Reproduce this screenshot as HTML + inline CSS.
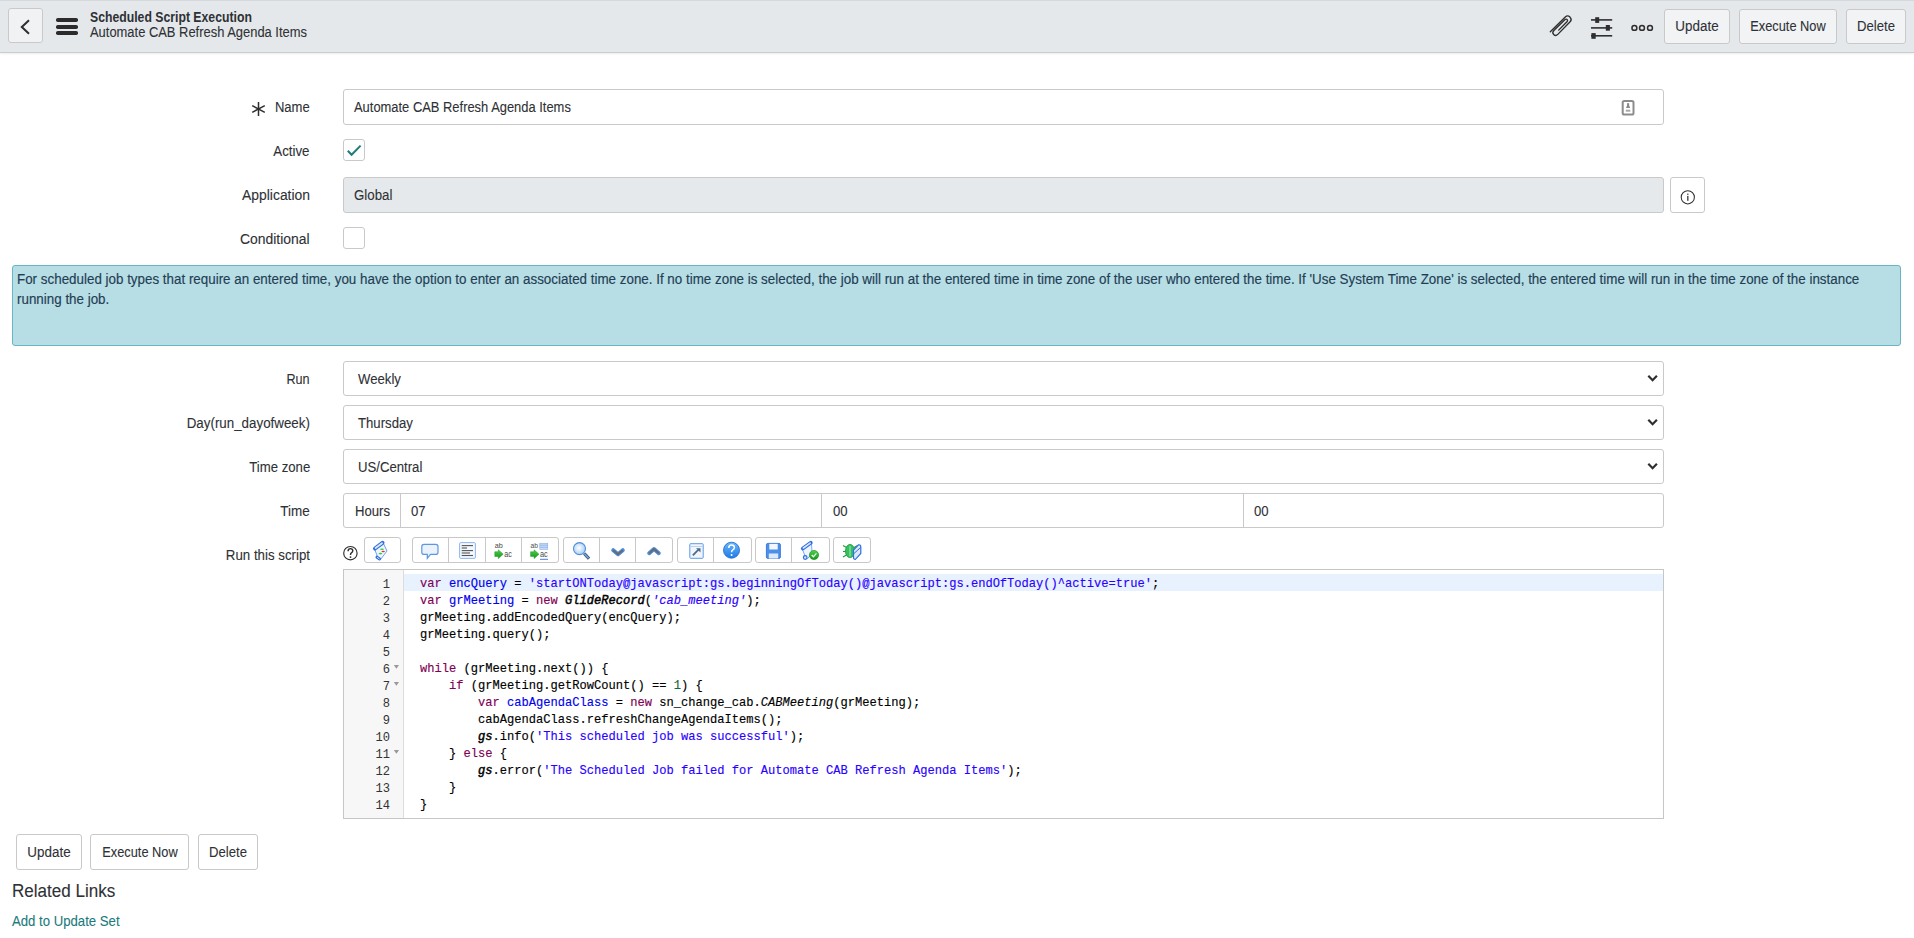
<!DOCTYPE html>
<html><head><meta charset="utf-8"><title>Scheduled Script Execution</title>
<style>
html,body{margin:0;padding:0;background:#fff;width:1914px;height:938px;overflow:hidden;position:relative;font-family:"Liberation Sans", sans-serif;}
</style></head><body>
<div style="position:absolute;left:0px;top:0px;width:1914px;height:53px;box-sizing:border-box;background:#e5e8eb;border-top:1px solid #d6d9dc;border-bottom:1px solid #cbcbcb;box-shadow:0 1px 2px rgba(0,0,0,0.08)"></div>
<div style="position:absolute;left:8px;top:8px;width:35px;height:35px;box-sizing:border-box;background:#f0f2f4;border:1px solid #c9c9c9;border-radius:3px"></div>
<svg style="position:absolute;left:18px;top:17px" width="14" height="20" viewBox="0 0 14 20"><polyline points="11,3.2 3.8,10 11,16.8" fill="none" stroke="#2e2e2e" stroke-width="2.0" stroke-linecap="butt" stroke-linejoin="miter"/></svg>
<div style="position:absolute;left:55.5px;top:18.2px;width:22.5px;height:3.6000000000000014px;box-sizing:border-box;background:#2b2b2b;border-radius:1.8px"></div>
<div style="position:absolute;left:55.5px;top:25.2px;width:22.5px;height:3.6000000000000014px;box-sizing:border-box;background:#2b2b2b;border-radius:1.8px"></div>
<div style="position:absolute;left:55.5px;top:31.3px;width:22.5px;height:3.599999999999998px;box-sizing:border-box;background:#2b2b2b;border-radius:1.8px"></div>
<div style="position:absolute;left:89.8px;top:8.00px;font-family:'Liberation Sans', sans-serif;font-size:13.95px;line-height:18px;font-weight:700;color:#2e3135;white-space:pre;-webkit-text-stroke:0px #2e3135;transform:scaleX(0.8781);transform-origin:left 0;">Scheduled Script Execution</div>
<div style="position:absolute;left:89.8px;top:23.00px;font-family:'Liberation Sans', sans-serif;font-size:14.24px;line-height:19px;font-weight:400;color:#2e3135;white-space:pre;-webkit-text-stroke:0.1px #2e3135;transform:scaleX(0.9080);transform-origin:left 0;">Automate CAB Refresh Agenda Items</div>
<svg style="position:absolute;left:1540px;top:10px" width="120" height="35" viewBox="1540 10 120 35"><path d="M1550.3 31.8 L1565.3 16.9 Q1567.6 14.8 1570 17.1 Q1572.3 19.5 1570.1 21.8 L1557.8 34.4 Q1555.7 36.5 1553.7 34.5 Q1551.8 32.5 1553.9 30.5 L1565.1 19.6 Q1566.2 18.6 1567.2 19.6 Q1568.1 20.6 1567 21.7 L1558.7 30.1" fill="none" stroke="#2e2e2e" stroke-width="1.35" stroke-linecap="round" stroke-linejoin="round"/><g stroke="#2e2e2e" stroke-width="1.6"><line x1="1591" y1="19.9" x2="1612.2" y2="19.9"/><line x1="1591" y1="27.9" x2="1612.2" y2="27.9"/><line x1="1591" y1="35.8" x2="1612.2" y2="35.8"/></g><g fill="#2e2e2e"><rect x="1595.2" y="17.2" width="4" height="5.7"/><rect x="1605.8" y="25" width="4.1" height="5.7"/><rect x="1591.4" y="33.1" width="4.3" height="5.7"/></g><g fill="none" stroke="#2e2e2e" stroke-width="1.5"><circle cx="1634.4" cy="27.9" r="2.45"/><circle cx="1642" cy="27.9" r="2.45"/><circle cx="1650" cy="27.9" r="2.45"/></g></svg>
<div style="position:absolute;left:1664px;top:9px;width:66px;height:35px;box-sizing:border-box;background:#f1f3f5;border:1px solid #c9c9c9;border-radius:3px"></div>
<div style="position:absolute;left:1197.0px;width:1000px;text-align:center;top:17.00px;font-family:'Liberation Sans', sans-serif;font-size:14.53px;line-height:19px;font-weight:400;color:#2e3135;white-space:pre;-webkit-text-stroke:0.1px #2e3135;transform:scaleX(0.9243);transform-origin:center 0;">Update</div>
<div style="position:absolute;left:1739px;top:9px;width:98px;height:35px;box-sizing:border-box;background:#f1f3f5;border:1px solid #c9c9c9;border-radius:3px"></div>
<div style="position:absolute;left:1288.0px;width:1000px;text-align:center;top:17.00px;font-family:'Liberation Sans', sans-serif;font-size:14.53px;line-height:19px;font-weight:400;color:#2e3135;white-space:pre;-webkit-text-stroke:0.1px #2e3135;transform:scaleX(0.8816);transform-origin:center 0;">Execute Now</div>
<div style="position:absolute;left:1846px;top:9px;width:60px;height:35px;box-sizing:border-box;background:#f1f3f5;border:1px solid #c9c9c9;border-radius:3px"></div>
<div style="position:absolute;left:1376.0px;width:1000px;text-align:center;top:17.00px;font-family:'Liberation Sans', sans-serif;font-size:14.53px;line-height:19px;font-weight:400;color:#2e3135;white-space:pre;-webkit-text-stroke:0.1px #2e3135;transform:scaleX(0.9023);transform-origin:center 0;">Delete</div>
<div style="position:absolute;right:1604px;top:98.00px;font-family:'Liberation Sans', sans-serif;font-size:14.53px;line-height:19px;font-weight:400;color:#2e3135;white-space:pre;-webkit-text-stroke:0.1px #2e3135;transform:scaleX(0.8981);transform-origin:right 0;">Name</div>
<svg style="position:absolute;left:251px;top:101px" width="15" height="16" viewBox="0 0 15 16"><g stroke="#2e2e2e" stroke-width="1.5"><line x1="7.5" y1="1" x2="7.5" y2="15"/><line x1="1.2" y1="4.6" x2="13.8" y2="11.4"/><line x1="1.2" y1="11.4" x2="13.8" y2="4.6"/></g></svg>
<div style="position:absolute;right:1604px;top:142.00px;font-family:'Liberation Sans', sans-serif;font-size:14.53px;line-height:19px;font-weight:400;color:#2e3135;white-space:pre;-webkit-text-stroke:0.1px #2e3135;transform:scaleX(0.9174);transform-origin:right 0;">Active</div>
<div style="position:absolute;right:1604px;top:186.00px;font-family:'Liberation Sans', sans-serif;font-size:14.53px;line-height:19px;font-weight:400;color:#2e3135;white-space:pre;-webkit-text-stroke:0.1px #2e3135;transform:scaleX(0.9566);transform-origin:right 0;">Application</div>
<div style="position:absolute;right:1604px;top:230.00px;font-family:'Liberation Sans', sans-serif;font-size:14.53px;line-height:19px;font-weight:400;color:#2e3135;white-space:pre;-webkit-text-stroke:0.1px #2e3135;transform:scaleX(0.9587);transform-origin:right 0;">Conditional</div>
<div style="position:absolute;right:1604px;top:370.00px;font-family:'Liberation Sans', sans-serif;font-size:14.53px;line-height:19px;font-weight:400;color:#2e3135;white-space:pre;-webkit-text-stroke:0.1px #2e3135;transform:scaleX(0.8706);transform-origin:right 0;">Run</div>
<div style="position:absolute;right:1604px;top:414.00px;font-family:'Liberation Sans', sans-serif;font-size:14.53px;line-height:19px;font-weight:400;color:#2e3135;white-space:pre;-webkit-text-stroke:0.1px #2e3135;transform:scaleX(0.9202);transform-origin:right 0;">Day(run_dayofweek)</div>
<div style="position:absolute;right:1604px;top:458.00px;font-family:'Liberation Sans', sans-serif;font-size:14.53px;line-height:19px;font-weight:400;color:#2e3135;white-space:pre;-webkit-text-stroke:0.1px #2e3135;transform:scaleX(0.9064);transform-origin:right 0;">Time zone</div>
<div style="position:absolute;right:1604px;top:502.00px;font-family:'Liberation Sans', sans-serif;font-size:14.53px;line-height:19px;font-weight:400;color:#2e3135;white-space:pre;-webkit-text-stroke:0.1px #2e3135;transform:scaleX(0.9257);transform-origin:right 0;">Time</div>
<div style="position:absolute;right:1604px;top:546.00px;font-family:'Liberation Sans', sans-serif;font-size:14.53px;line-height:19px;font-weight:400;color:#2e3135;white-space:pre;-webkit-text-stroke:0.1px #2e3135;transform:scaleX(0.9147);transform-origin:right 0;">Run this script</div>
<div style="position:absolute;left:343px;top:89px;width:1321px;height:36px;box-sizing:border-box;background:#fff;border:1px solid #c9c9c9;border-radius:3px"></div>
<div style="position:absolute;left:353.9px;top:98.00px;font-family:'Liberation Sans', sans-serif;font-size:14.53px;line-height:19px;font-weight:400;color:#2e3135;white-space:pre;-webkit-text-stroke:0.1px #2e3135;transform:scaleX(0.8899);transform-origin:left 0;">Automate CAB Refresh Agenda Items</div>
<svg style="position:absolute;left:1615px;top:95px" width="25" height="25" viewBox="1615 95 25 25"><rect x="1622.7" y="101" width="10.8" height="13.6" rx="1.6" fill="#fff" stroke="#8c8c8c" stroke-width="2"/><circle cx="1628.1" cy="104.2" r="1.15" fill="#888"/><path d="M1626.1 108 L1627.2 105 L1629 105 L1630.1 108 Z" fill="#888"/><rect x="1625.8" y="109.7" width="4.5" height="2" fill="#a8a8a8"/></svg>
<div style="position:absolute;left:343px;top:139px;width:22px;height:22px;box-sizing:border-box;background:#fff;border:1px solid #c9c9c9;border-radius:3px"></div>
<svg style="position:absolute;left:346px;top:144px" width="16" height="13" viewBox="0 0 16 13"><polyline points="1.8,6.8 5.6,10.8 14.6,1.6" fill="none" stroke="#1f7c7d" stroke-width="2.0"/></svg>
<div style="position:absolute;left:343px;top:177px;width:1321px;height:36px;box-sizing:border-box;background:#e6e9eb;border:1px solid #c9c9c9;border-radius:3px"></div>
<div style="position:absolute;left:353.9px;top:186.00px;font-family:'Liberation Sans', sans-serif;font-size:14.53px;line-height:19px;font-weight:400;color:#2e3135;white-space:pre;-webkit-text-stroke:0.1px #2e3135;transform:scaleX(0.9140);transform-origin:left 0;">Global</div>
<div style="position:absolute;left:1670px;top:177px;width:35px;height:36px;box-sizing:border-box;background:#fff;border:1px solid #c9c9c9;border-radius:3px"></div>
<svg style="position:absolute;left:1679px;top:189px" width="18" height="18" viewBox="0 0 18 18"><circle cx="8.8" cy="8.3" r="6.6" fill="none" stroke="#2e2e2e" stroke-width="1.05"/><rect x="8.2" y="6.9" width="1.25" height="4.9" fill="#2e2e2e"/><rect x="8.2" y="4.6" width="1.25" height="1.25" fill="#2e2e2e"/></svg>
<div style="position:absolute;left:343px;top:227px;width:22px;height:22px;box-sizing:border-box;background:#fff;border:1px solid #c9c9c9;border-radius:3px"></div>
<div style="position:absolute;left:12px;top:265px;width:1889px;height:81px;box-sizing:border-box;background:#b7dde5;border:1px solid #69b5c8;border-radius:3px"></div>
<div style="position:absolute;left:17.2px;top:270.00px;font-family:'Liberation Sans', sans-serif;font-size:14.53px;line-height:19px;font-weight:400;color:#233e54;white-space:pre;-webkit-text-stroke:0.15px #233e54;transform:scaleX(0.9222);transform-origin:left 0;">For scheduled job types that require an entered time, you have the option to enter an associated time zone. If no time zone is selected, the job will run at the entered time in time zone of the user who entered the time. If 'Use System Time Zone' is selected, the entered time will run in the time zone of the instance</div>
<div style="position:absolute;left:17.2px;top:290.00px;font-family:'Liberation Sans', sans-serif;font-size:14.53px;line-height:19px;font-weight:400;color:#233e54;white-space:pre;-webkit-text-stroke:0.15px #233e54;transform:scaleX(0.9222);transform-origin:left 0;">running the job.</div>
<div style="position:absolute;left:343px;top:361px;width:1321px;height:35px;box-sizing:border-box;background:#fff;border:1px solid #c9c9c9;border-radius:3px"></div>
<div style="position:absolute;left:358.4px;top:370.00px;font-family:'Liberation Sans', sans-serif;font-size:14.53px;line-height:19px;font-weight:400;color:#2e3135;white-space:pre;-webkit-text-stroke:0.1px #2e3135;transform:scaleX(0.9064);transform-origin:left 0;">Weekly</div>
<svg style="position:absolute;left:1647px;top:374px" width="12" height="9" viewBox="0 0 12 9"><polyline points="1.3,1.8 5.6,6.2 9.9,1.8" fill="none" stroke="#2e2e2e" stroke-width="2.2"/></svg>
<div style="position:absolute;left:343px;top:405px;width:1321px;height:35px;box-sizing:border-box;background:#fff;border:1px solid #c9c9c9;border-radius:3px"></div>
<div style="position:absolute;left:358.4px;top:414.00px;font-family:'Liberation Sans', sans-serif;font-size:14.53px;line-height:19px;font-weight:400;color:#2e3135;white-space:pre;-webkit-text-stroke:0.1px #2e3135;transform:scaleX(0.9064);transform-origin:left 0;">Thursday</div>
<svg style="position:absolute;left:1647px;top:418px" width="12" height="9" viewBox="0 0 12 9"><polyline points="1.3,1.8 5.6,6.2 9.9,1.8" fill="none" stroke="#2e2e2e" stroke-width="2.2"/></svg>
<div style="position:absolute;left:343px;top:449px;width:1321px;height:35px;box-sizing:border-box;background:#fff;border:1px solid #c9c9c9;border-radius:3px"></div>
<div style="position:absolute;left:358.4px;top:458.00px;font-family:'Liberation Sans', sans-serif;font-size:14.53px;line-height:19px;font-weight:400;color:#2e3135;white-space:pre;-webkit-text-stroke:0.1px #2e3135;transform:scaleX(0.9064);transform-origin:left 0;">US/Central</div>
<svg style="position:absolute;left:1647px;top:462px" width="12" height="9" viewBox="0 0 12 9"><polyline points="1.3,1.8 5.6,6.2 9.9,1.8" fill="none" stroke="#2e2e2e" stroke-width="2.2"/></svg>
<div style="position:absolute;left:343px;top:493px;width:1321px;height:35px;box-sizing:border-box;background:#fff;border:1px solid #c9c9c9;border-radius:3px"></div>
<div style="position:absolute;left:400px;top:494px;width:1px;height:33px;box-sizing:border-box;background:#c9c9c9"></div>
<div style="position:absolute;left:821px;top:494px;width:1px;height:33px;box-sizing:border-box;background:#c9c9c9"></div>
<div style="position:absolute;left:1243px;top:494px;width:1px;height:33px;box-sizing:border-box;background:#c9c9c9"></div>
<div style="position:absolute;left:354.6px;top:502.00px;font-family:'Liberation Sans', sans-serif;font-size:14.53px;line-height:19px;font-weight:400;color:#2e3135;white-space:pre;-webkit-text-stroke:0.1px #2e3135;transform:scaleX(0.9057);transform-origin:left 0;">Hours</div>
<div style="position:absolute;left:410.8px;top:502.00px;font-family:'Liberation Sans', sans-serif;font-size:14.53px;line-height:19px;font-weight:400;color:#2e3135;white-space:pre;-webkit-text-stroke:0.1px #2e3135;transform:scaleX(0.9057);transform-origin:left 0;">07</div>
<div style="position:absolute;left:832.8px;top:502.00px;font-family:'Liberation Sans', sans-serif;font-size:14.53px;line-height:19px;font-weight:400;color:#2e3135;white-space:pre;-webkit-text-stroke:0.1px #2e3135;transform:scaleX(0.9057);transform-origin:left 0;">00</div>
<div style="position:absolute;left:1254.4px;top:502.00px;font-family:'Liberation Sans', sans-serif;font-size:14.53px;line-height:19px;font-weight:400;color:#2e3135;white-space:pre;-webkit-text-stroke:0.1px #2e3135;transform:scaleX(0.9057);transform-origin:left 0;">00</div>
<svg style="position:absolute;left:340px;top:543px" width="20" height="20" viewBox="0 0 20 20"><circle cx="10.4" cy="10.2" r="6.7" fill="#fff" stroke="#2e2e2e" stroke-width="1.15"/><path d="M8.1 8.2 Q8.1 5.6 10.5 5.6 Q12.8 5.6 12.8 7.8 Q12.8 9.1 11.4 9.9 Q10.5 10.4 10.5 12" fill="none" stroke="#2e2e2e" stroke-width="1.4"/><circle cx="10.5" cy="14.1" r="0.95" fill="#2e2e2e"/></svg>
<div style="position:absolute;left:364px;top:537px;width:37px;height:26px;box-sizing:border-box;background:#fff;border:1px solid #c8c8c8;border-radius:3px"></div>
<div style="position:absolute;left:412px;top:537px;width:147px;height:26px;box-sizing:border-box;background:#fff;border:1px solid #c8c8c8;border-radius:3px"></div>
<div style="position:absolute;left:448px;top:538px;width:1px;height:24px;box-sizing:border-box;background:#c8c8c8"></div>
<div style="position:absolute;left:485px;top:538px;width:1px;height:24px;box-sizing:border-box;background:#c8c8c8"></div>
<div style="position:absolute;left:521px;top:538px;width:1px;height:24px;box-sizing:border-box;background:#c8c8c8"></div>
<div style="position:absolute;left:563px;top:537px;width:110px;height:26px;box-sizing:border-box;background:#fff;border:1px solid #c8c8c8;border-radius:3px"></div>
<div style="position:absolute;left:599px;top:538px;width:1px;height:24px;box-sizing:border-box;background:#c8c8c8"></div>
<div style="position:absolute;left:635px;top:538px;width:1px;height:24px;box-sizing:border-box;background:#c8c8c8"></div>
<div style="position:absolute;left:677px;top:537px;width:75px;height:26px;box-sizing:border-box;background:#fff;border:1px solid #c8c8c8;border-radius:3px"></div>
<div style="position:absolute;left:713px;top:538px;width:1px;height:24px;box-sizing:border-box;background:#c8c8c8"></div>
<div style="position:absolute;left:755px;top:537px;width:75px;height:26px;box-sizing:border-box;background:#fff;border:1px solid #c8c8c8;border-radius:3px"></div>
<div style="position:absolute;left:791px;top:538px;width:1px;height:24px;box-sizing:border-box;background:#c8c8c8"></div>
<div style="position:absolute;left:833px;top:537px;width:38px;height:26px;box-sizing:border-box;background:#fff;border:1px solid #c8c8c8;border-radius:3px"></div>
<svg style="position:absolute;left:340px;top:535px" width="540" height="30" viewBox="340 535 540 30">
<defs>
 <radialGradient id="mg" cx="0.45" cy="0.45" r="0.6"><stop offset="0" stop-color="#ffffff"/><stop offset="1" stop-color="#9fcaf5"/></radialGradient>
 <linearGradient id="hb" x1="0" y1="0" x2="0" y2="1"><stop offset="0" stop-color="#6ab8fb"/><stop offset="1" stop-color="#1e7be6"/></linearGradient>
 <linearGradient id="gb" x1="0" y1="0" x2="0" y2="1"><stop offset="0" stop-color="#4fd04f"/><stop offset="1" stop-color="#15961b"/></linearGradient>
</defs>
<!-- script icon -->
<g>
 <path d="M374.5 549 L378.2 558.3 L380.5 559.5 L387 551 L383.5 543.5 Z" fill="#eef5fe" stroke="#6ea2f0" stroke-width="1"/>
 <line x1="375" y1="548.5" x2="382.5" y2="542.8" stroke="#2f6fe0" stroke-width="4" stroke-linecap="round"/>
 <line x1="375.6" y1="548" x2="382" y2="543.2" stroke="#d9e8fc" stroke-width="1.8" stroke-linecap="round"/>
 <line x1="377" y1="557.2" x2="379.6" y2="559" stroke="#2f6fe0" stroke-width="3" stroke-linecap="round"/><line x1="377.4" y1="557.5" x2="379.2" y2="558.7" stroke="#d9e8fc" stroke-width="1" stroke-linecap="round"/>
 <ellipse cx="382" cy="549.2" rx="1.9" ry="0.8" fill="#3fc83f"/>
 <ellipse cx="383.2" cy="551.5" rx="1.7" ry="0.8" fill="#e0301c"/>
 <ellipse cx="380.5" cy="553.6" rx="1.9" ry="0.8" fill="#3fc83f"/>
</g>
<!-- comment bubble -->
<path d="M424 544.3 L435.8 544.3 Q438 544.3 438 546.5 L438 552.2 Q438 554.4 435.8 554.4 L430.5 554.4 L427.3 558.4 L427.3 554.4 L424 554.4 Q421.8 554.4 421.8 552.2 L421.8 546.5 Q421.8 544.3 424 544.3 Z" fill="#eaf2fc" stroke="#5d97e0" stroke-width="1.2"/>
<!-- format -->
<rect x="459.6" y="542.6" width="15.8" height="15.8" rx="1.2" fill="#f3f8fe" stroke="#8fb6ef" stroke-width="1"/>
<g stroke="#555" stroke-width="1.1">
 <line x1="461.7" y1="545.6" x2="473" y2="545.6"/>
 <line x1="461.7" y1="548" x2="467" y2="548"/>
 <line x1="461.7" y1="550.6" x2="473" y2="550.6"/>
 <line x1="461.7" y1="553" x2="470" y2="553"/>
 <line x1="461.7" y1="555.5" x2="473" y2="555.5"/>
</g>
<!-- replace -->
<text x="494.8" y="548.4" font-family="Liberation Sans" font-size="7.5" textLength="8" lengthAdjust="spacingAndGlyphs" fill="#4a4a4a">ab</text>
<text x="504.3" y="556.8" font-family="Liberation Sans" font-size="8.5" textLength="7.6" lengthAdjust="spacingAndGlyphs" fill="#4a4a4a">ac</text>
<path d="M494.8 551.8 L498.3 551.8 L498.3 549.8 L503.2 554.2 L498.3 558.6 L498.3 556.4 L494.8 556.4 Z" fill="url(#gb)" stroke="#1a9a1a" stroke-width="0.5"/>
<!-- replace all -->
<text x="530.6" y="548.4" font-family="Liberation Sans" font-size="7.5" textLength="7.4" lengthAdjust="spacingAndGlyphs" fill="#4a4a4a">ab</text>
<rect x="539.8" y="543.2" width="8" height="6.2" fill="#c6dbf6" stroke="#7aa6e6" stroke-width="0.5"/>
<g stroke="#7aa6e6" stroke-width="0.6"><line x1="539.8" y1="545.2" x2="547.8" y2="545.2"/><line x1="539.8" y1="547.3" x2="547.8" y2="547.3"/></g>
<text x="540" y="557" font-family="Liberation Sans" font-size="8.5" textLength="7.8" lengthAdjust="spacingAndGlyphs" fill="#4a4a4a">ac</text>
<line x1="540" y1="559.3" x2="548" y2="559.3" stroke="#2f6fe0" stroke-width="0.9"/>
<path d="M530.6 551.8 L534.1 551.8 L534.1 549.8 L539 554.2 L534.1 558.6 L534.1 556.4 L530.6 556.4 Z" fill="url(#gb)" stroke="#1a9a1a" stroke-width="0.5"/>
<!-- magnifier -->
<line x1="584.3" y1="553.5" x2="589" y2="558.8" stroke="#3a4a5a" stroke-width="3.2" stroke-linecap="butt"/>
<line x1="584.6" y1="553.9" x2="588.6" y2="558.3" stroke="#6aa0e0" stroke-width="1.8"/>
<circle cx="579.5" cy="548.6" r="6" fill="url(#mg)" stroke="#4f8fd8" stroke-width="1.1"/>
<!-- chevrons -->
<polyline points="613.2,550.2 618,554.2 622.8,550.2" fill="none" stroke="#4a8ee0" stroke-width="4" stroke-linejoin="round" stroke-linecap="round"/>
<polyline points="613.2,550.2 618,554.2 622.8,550.2" fill="none" stroke="#6b6b6b" stroke-width="2"/>
<polyline points="649.2,553.2 654,549 658.8,553.2" fill="none" stroke="#4a8ee0" stroke-width="4" stroke-linejoin="round" stroke-linecap="round"/>
<polyline points="649.2,553.2 654,549 658.8,553.2" fill="none" stroke="#6b6b6b" stroke-width="2"/>
<!-- fullscreen -->
<rect x="689.8" y="543.7" width="13.4" height="14.6" rx="0.8" fill="#f1f6fd" stroke="#5f98e6" stroke-width="1"/>
<line x1="690" y1="546.5" x2="703" y2="546.5" stroke="#b9d3f5" stroke-width="1"/>
<line x1="692.8" y1="555.3" x2="698.5" y2="549.6" stroke="#4f6a86" stroke-width="1.8"/>
<path d="M696 548.2 L700.5 548.2 L700.5 552.6 Z" fill="#4f6a86"/>
<!-- blue help -->
<circle cx="731.5" cy="550.2" r="8" fill="url(#hb)" stroke="#1a5fcc" stroke-width="0.8"/>
<path d="M728.8 548 Q728.8 545 731.6 545 Q734.4 545 734.4 547.6 Q734.4 549.2 732.6 550.2 Q731.6 550.8 731.6 552.2" fill="none" stroke="#fff" stroke-width="1.5"/>
<circle cx="731.6" cy="555" r="0.95" fill="#fff"/>
<!-- floppy -->
<rect x="766.4" y="543.4" width="14" height="15" rx="1.4" fill="#4a90ea" stroke="#2a6ad8" stroke-width="0.8"/>
<rect x="769.3" y="543.9" width="8.4" height="5.6" fill="#f4f8fe"/>
<rect x="768.8" y="553.5" width="9.4" height="5" fill="#dbe9fb"/>
<!-- script check -->
<g>
 <path d="M802.3 549 L805.7 557.8 L807.5 558.8 L812 553 L811.5 543.5 Z" fill="#eef5fe" stroke="#6ea2f0" stroke-width="0.9"/>
 <line x1="802.8" y1="548.5" x2="810.8" y2="542.8" stroke="#2f6fe0" stroke-width="3.8" stroke-linecap="round"/>
 <line x1="803.4" y1="548" x2="810.2" y2="543.2" stroke="#d9e8fc" stroke-width="1.6" stroke-linecap="round"/>
 <circle cx="805.2" cy="557.5" r="1.8" fill="#cfe2fb" stroke="#2f6fe0" stroke-width="1.2"/>
 <circle cx="814" cy="555" r="4.6" fill="url(#gb)" stroke="#108a18" stroke-width="0.6"/>
 <polyline points="811.7,555 813.4,556.8 816.4,553.3" fill="none" stroke="#e8ffe8" stroke-width="1.3"/>
</g>
<!-- bug -->
<g stroke="#1e9a3a" stroke-width="1.1">
 <line x1="843" y1="545.5" x2="846.5" y2="547.5"/><line x1="857.5" y1="545.5" x2="854" y2="547.5"/>
 <line x1="843" y1="551.5" x2="845.5" y2="551.5"/>
 <line x1="843" y1="557" x2="846.5" y2="555"/>
</g>
<ellipse cx="850" cy="551" rx="4.6" ry="6.6" fill="#35c060" stroke="#1e9a3a" stroke-width="0.8"/>
<line x1="850" y1="546" x2="850" y2="556.5" stroke="#b5f0c5" stroke-width="0.9"/>
<path d="M853.5 550 L858.5 544.8 Q860.8 544.5 860.8 547 L860.8 553.5 L855.5 559.3 Q853.5 559.5 853.5 557.2 Z" fill="#dbe9fc" stroke="#2f6fe0" stroke-width="1.2"/>
<line x1="854" y1="553.5" x2="860.5" y2="547.5" stroke="#2f6fe0" stroke-width="1"/>
</svg>
<div style="position:absolute;left:343px;top:569px;width:1321px;height:250px;box-sizing:border-box;background:#fff;border:1px solid #c6c6c6"></div>
<div style="position:absolute;left:344px;top:570px;width:60px;height:248px;box-sizing:border-box;background:#f7f7f7;border-right:1px solid #dddddd"></div>
<div style="position:absolute;left:404px;top:574px;width:1259px;height:17px;box-sizing:border-box;background:#e8f2ff"></div>
<div style="position:absolute;left:420px;top:576px;height:17px;font-family:'Liberation Mono', monospace;font-size:12.08px;line-height:17px;color:#000;white-space:pre;-webkit-text-stroke:0.15px currentColor"><span style="color:#7f0055">var</span> <span style="color:#0000f0">encQuery</span> = <span style="color:#2a00ff">'startONToday@javascript:gs.beginningOfToday()@javascript:gs.endOfToday()^active=true'</span>;</div>
<div style="position:absolute;right:1524px;top:577px;height:17px;font-family:'Liberation Mono', monospace;font-size:12.08px;line-height:17px;color:#333;white-space:pre">1</div>
<div style="position:absolute;left:420px;top:593px;height:17px;font-family:'Liberation Mono', monospace;font-size:12.08px;line-height:17px;color:#000;white-space:pre;-webkit-text-stroke:0.15px currentColor"><span style="color:#7f0055">var</span> <span style="color:#0000f0">grMeeting</span> = <span style="color:#7f0055">new</span> <span style="font-style:italic;-webkit-text-stroke:0.45px #000">GlideRecord</span>(<span style="color:#2a00ff;font-style:italic">'cab_meeting'</span>);</div>
<div style="position:absolute;right:1524px;top:594px;height:17px;font-family:'Liberation Mono', monospace;font-size:12.08px;line-height:17px;color:#333;white-space:pre">2</div>
<div style="position:absolute;left:420px;top:610px;height:17px;font-family:'Liberation Mono', monospace;font-size:12.08px;line-height:17px;color:#000;white-space:pre;-webkit-text-stroke:0.15px currentColor">grMeeting.addEncodedQuery(encQuery);</div>
<div style="position:absolute;right:1524px;top:611px;height:17px;font-family:'Liberation Mono', monospace;font-size:12.08px;line-height:17px;color:#333;white-space:pre">3</div>
<div style="position:absolute;left:420px;top:627px;height:17px;font-family:'Liberation Mono', monospace;font-size:12.08px;line-height:17px;color:#000;white-space:pre;-webkit-text-stroke:0.15px currentColor">grMeeting.query();</div>
<div style="position:absolute;right:1524px;top:628px;height:17px;font-family:'Liberation Mono', monospace;font-size:12.08px;line-height:17px;color:#333;white-space:pre">4</div>
<div style="position:absolute;left:420px;top:644px;height:17px;font-family:'Liberation Mono', monospace;font-size:12.08px;line-height:17px;color:#000;white-space:pre;-webkit-text-stroke:0.15px currentColor"></div>
<div style="position:absolute;right:1524px;top:645px;height:17px;font-family:'Liberation Mono', monospace;font-size:12.08px;line-height:17px;color:#333;white-space:pre">5</div>
<div style="position:absolute;left:420px;top:661px;height:17px;font-family:'Liberation Mono', monospace;font-size:12.08px;line-height:17px;color:#000;white-space:pre;-webkit-text-stroke:0.15px currentColor"><span style="color:#7f0055">while</span> (grMeeting.next()) {</div>
<div style="position:absolute;right:1524px;top:662px;height:17px;font-family:'Liberation Mono', monospace;font-size:12.08px;line-height:17px;color:#333;white-space:pre">6</div>
<div style="position:absolute;left:420px;top:678px;height:17px;font-family:'Liberation Mono', monospace;font-size:12.08px;line-height:17px;color:#000;white-space:pre;-webkit-text-stroke:0.15px currentColor">    <span style="color:#7f0055">if</span> (grMeeting.getRowCount() == <span style='color:#116644'>1</span>) {</div>
<div style="position:absolute;right:1524px;top:679px;height:17px;font-family:'Liberation Mono', monospace;font-size:12.08px;line-height:17px;color:#333;white-space:pre">7</div>
<div style="position:absolute;left:420px;top:695px;height:17px;font-family:'Liberation Mono', monospace;font-size:12.08px;line-height:17px;color:#000;white-space:pre;-webkit-text-stroke:0.15px currentColor">        <span style="color:#7f0055">var</span> <span style="color:#0000f0">cabAgendaClass</span> = <span style="color:#7f0055">new</span> sn_change_cab.<span style='font-style:italic'>CABMeeting</span>(grMeeting);</div>
<div style="position:absolute;right:1524px;top:696px;height:17px;font-family:'Liberation Mono', monospace;font-size:12.08px;line-height:17px;color:#333;white-space:pre">8</div>
<div style="position:absolute;left:420px;top:712px;height:17px;font-family:'Liberation Mono', monospace;font-size:12.08px;line-height:17px;color:#000;white-space:pre;-webkit-text-stroke:0.15px currentColor">        cabAgendaClass.refreshChangeAgendaItems();</div>
<div style="position:absolute;right:1524px;top:713px;height:17px;font-family:'Liberation Mono', monospace;font-size:12.08px;line-height:17px;color:#333;white-space:pre">9</div>
<div style="position:absolute;left:420px;top:729px;height:17px;font-family:'Liberation Mono', monospace;font-size:12.08px;line-height:17px;color:#000;white-space:pre;-webkit-text-stroke:0.15px currentColor">        <span style="font-style:italic;-webkit-text-stroke:0.45px #000">gs</span>.info(<span style="color:#2a00ff">'This scheduled job was successful'</span>);</div>
<div style="position:absolute;right:1524px;top:730px;height:17px;font-family:'Liberation Mono', monospace;font-size:12.08px;line-height:17px;color:#333;white-space:pre">10</div>
<div style="position:absolute;left:420px;top:746px;height:17px;font-family:'Liberation Mono', monospace;font-size:12.08px;line-height:17px;color:#000;white-space:pre;-webkit-text-stroke:0.15px currentColor">    } <span style="color:#7f0055">else</span> {</div>
<div style="position:absolute;right:1524px;top:747px;height:17px;font-family:'Liberation Mono', monospace;font-size:12.08px;line-height:17px;color:#333;white-space:pre">11</div>
<div style="position:absolute;left:420px;top:763px;height:17px;font-family:'Liberation Mono', monospace;font-size:12.08px;line-height:17px;color:#000;white-space:pre;-webkit-text-stroke:0.15px currentColor">        <span style="font-style:italic;-webkit-text-stroke:0.45px #000">gs</span>.error(<span style="color:#2a00ff">'The Scheduled Job failed for Automate CAB Refresh Agenda Items'</span>);</div>
<div style="position:absolute;right:1524px;top:764px;height:17px;font-family:'Liberation Mono', monospace;font-size:12.08px;line-height:17px;color:#333;white-space:pre">12</div>
<div style="position:absolute;left:420px;top:780px;height:17px;font-family:'Liberation Mono', monospace;font-size:12.08px;line-height:17px;color:#000;white-space:pre;-webkit-text-stroke:0.15px currentColor">    }</div>
<div style="position:absolute;right:1524px;top:781px;height:17px;font-family:'Liberation Mono', monospace;font-size:12.08px;line-height:17px;color:#333;white-space:pre">13</div>
<div style="position:absolute;left:420px;top:797px;height:17px;font-family:'Liberation Mono', monospace;font-size:12.08px;line-height:17px;color:#000;white-space:pre;-webkit-text-stroke:0.15px currentColor">}</div>
<div style="position:absolute;right:1524px;top:798px;height:17px;font-family:'Liberation Mono', monospace;font-size:12.08px;line-height:17px;color:#333;white-space:pre">14</div>
<svg style="position:absolute;left:393px;top:664px" width="7" height="6" viewBox="0 0 7 6"><path d="M0.8 1 L6 1 L3.4 4.8 Z" fill="#999"/></svg>
<svg style="position:absolute;left:393px;top:681px" width="7" height="6" viewBox="0 0 7 6"><path d="M0.8 1 L6 1 L3.4 4.8 Z" fill="#999"/></svg>
<svg style="position:absolute;left:393px;top:749px" width="7" height="6" viewBox="0 0 7 6"><path d="M0.8 1 L6 1 L3.4 4.8 Z" fill="#999"/></svg>
<div style="position:absolute;left:16px;top:834px;width:66px;height:36px;box-sizing:border-box;background:#fff;border:1px solid #c9c9c9;border-radius:3px"></div>
<div style="position:absolute;left:-451.0px;width:1000px;text-align:center;top:843.00px;font-family:'Liberation Sans', sans-serif;font-size:14.53px;line-height:19px;font-weight:400;color:#2e3135;white-space:pre;-webkit-text-stroke:0.1px #2e3135;transform:scaleX(0.9243);transform-origin:center 0;">Update</div>
<div style="position:absolute;left:90px;top:834px;width:99px;height:36px;box-sizing:border-box;background:#fff;border:1px solid #c9c9c9;border-radius:3px"></div>
<div style="position:absolute;left:-360.5px;width:1000px;text-align:center;top:843.00px;font-family:'Liberation Sans', sans-serif;font-size:14.53px;line-height:19px;font-weight:400;color:#2e3135;white-space:pre;-webkit-text-stroke:0.1px #2e3135;transform:scaleX(0.8816);transform-origin:center 0;">Execute Now</div>
<div style="position:absolute;left:198px;top:834px;width:60px;height:36px;box-sizing:border-box;background:#fff;border:1px solid #c9c9c9;border-radius:3px"></div>
<div style="position:absolute;left:-272.0px;width:1000px;text-align:center;top:843.00px;font-family:'Liberation Sans', sans-serif;font-size:14.53px;line-height:19px;font-weight:400;color:#2e3135;white-space:pre;-webkit-text-stroke:0.1px #2e3135;transform:scaleX(0.9023);transform-origin:center 0;">Delete</div>
<div style="position:absolute;left:12.1px;top:880.00px;font-family:'Liberation Sans', sans-serif;font-size:18.02px;line-height:23px;font-weight:400;color:#2e3135;white-space:pre;-webkit-text-stroke:0.1px #2e3135;transform:scaleX(0.9462);transform-origin:left 0;">Related Links</div>
<div style="position:absolute;left:11.9px;top:911.00px;font-family:'Liberation Sans', sans-serif;font-size:15.12px;line-height:20px;font-weight:400;color:#1a7a7c;white-space:pre;-webkit-text-stroke:0.1px #1a7a7c;transform:scaleX(0.8710);transform-origin:left 0;">Add to Update Set</div>
</body></html>
